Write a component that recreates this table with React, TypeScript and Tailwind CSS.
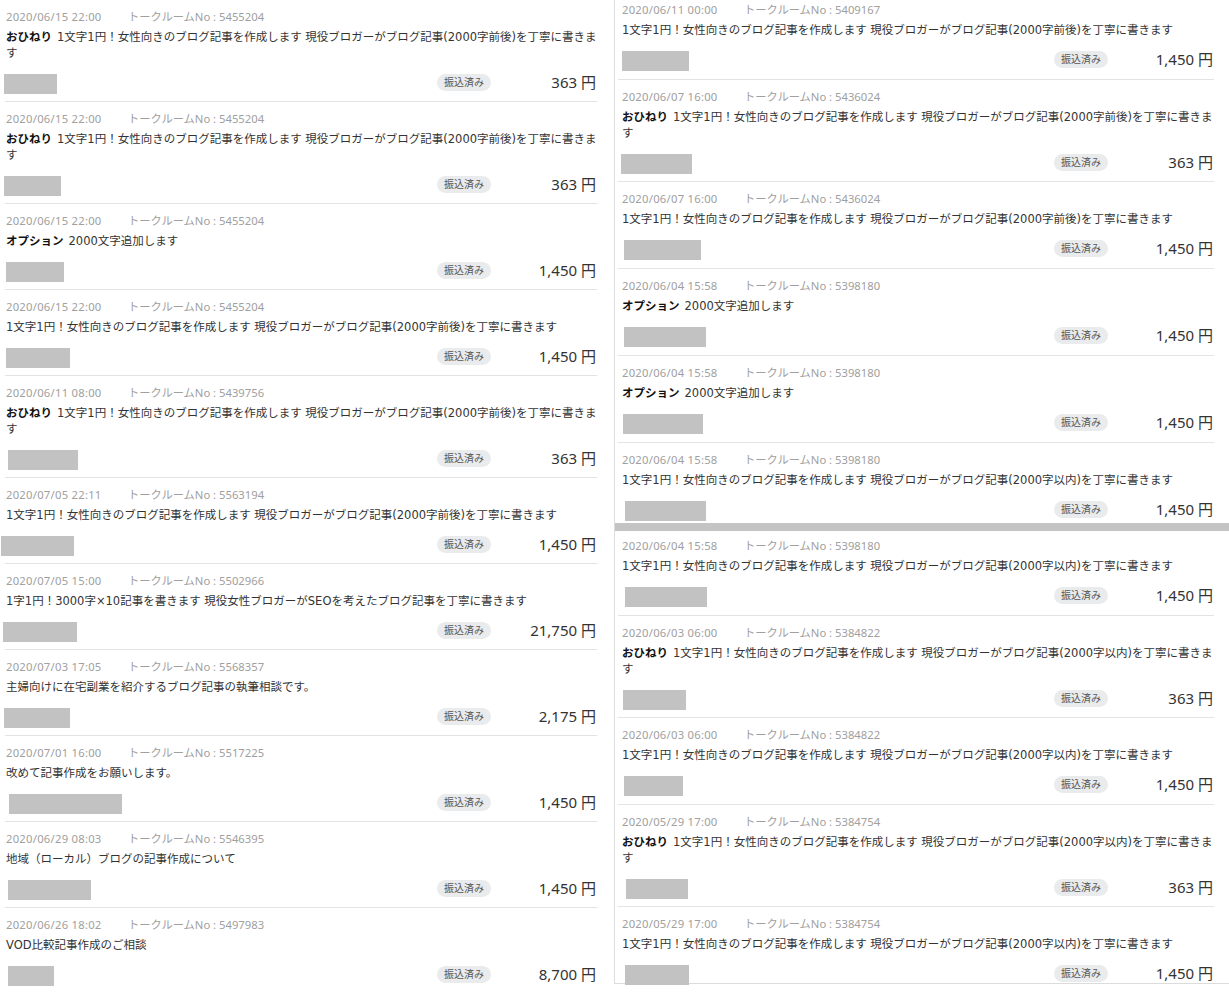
import React from "react";

type Row = {
  date: string;
  room: string;
  tag?: string;
  title: string;
  price: string;
  bx: number;
  bw: number;
};

const T_MAE = "1文字1円！女性向きのブログ記事を作成します 現役ブロガーがブログ記事(2000字前後)を丁寧に書きます";
const T_NAI = "1文字1円！女性向きのブログ記事を作成します 現役ブロガーがブログ記事(2000字以内)を丁寧に書きます";
const T_OPT = "2000文字追加します";

const left: Row[] = [
  { date: "2020/06/15 22:00", room: "5455204", tag: "おひねり", title: T_MAE, price: "363", bx: -2, bw: 53 },
  { date: "2020/06/15 22:00", room: "5455204", tag: "おひねり", title: T_MAE, price: "363", bx: -2, bw: 57 },
  { date: "2020/06/15 22:00", room: "5455204", tag: "オプション", title: T_OPT, price: "1,450", bx: 0, bw: 58 },
  { date: "2020/06/15 22:00", room: "5455204", title: T_MAE, price: "1,450", bx: 0, bw: 64 },
  { date: "2020/06/11 08:00", room: "5439756", tag: "おひねり", title: T_MAE, price: "363", bx: 2, bw: 70 },
  { date: "2020/07/05 22:11", room: "5563194", title: T_MAE, price: "1,450", bx: -5, bw: 73 },
  {
    date: "2020/07/05 15:00",
    room: "5502966",
    title: "1字1円！3000字×10記事を書きます 現役女性ブロガーがSEOを考えたブログ記事を丁寧に書きます",
    price: "21,750",
    bx: -3,
    bw: 74,
  },
  { date: "2020/07/03 17:05", room: "5568357", title: "主婦向けに在宅副業を紹介するブログ記事の執筆相談です。", price: "2,175", bx: -2, bw: 66 },
  { date: "2020/07/01 16:00", room: "5517225", title: "改めて記事作成をお願いします。", price: "1,450", bx: 3, bw: 113 },
  { date: "2020/06/29 08:03", room: "5546395", title: "地域（ローカル）ブログの記事作成について", price: "1,450", bx: 2, bw: 83 },
  { date: "2020/06/26 18:02", room: "5497983", title: "VOD比較記事作成のご相談", price: "8,700", bx: 2, bw: 46 },
];

const rightTop: Row[] = [
  { date: "2020/06/11 00:00", room: "5409167", title: T_MAE, price: "1,450", bx: 0, bw: 67 },
  { date: "2020/06/07 16:00", room: "5436024", tag: "おひねり", title: T_MAE, price: "363", bx: -1, bw: 71 },
  { date: "2020/06/07 16:00", room: "5436024", title: T_MAE, price: "1,450", bx: 2, bw: 77 },
  { date: "2020/06/04 15:58", room: "5398180", tag: "オプション", title: T_OPT, price: "1,450", bx: 2, bw: 82 },
  { date: "2020/06/04 15:58", room: "5398180", tag: "オプション", title: T_OPT, price: "1,450", bx: 1, bw: 80 },
  { date: "2020/06/04 15:58", room: "5398180", title: T_NAI, price: "1,450", bx: 3, bw: 81 },
];

const rightBottom: Row[] = [
  { date: "2020/06/04 15:58", room: "5398180", title: T_NAI, price: "1,450", bx: 3, bw: 82 },
  { date: "2020/06/03 06:00", room: "5384822", tag: "おひねり", title: T_NAI, price: "363", bx: 1, bw: 63 },
  { date: "2020/06/03 06:00", room: "5384822", title: T_NAI, price: "1,450", bx: 2, bw: 59 },
  { date: "2020/05/29 17:00", room: "5384754", tag: "おひねり", title: T_NAI, price: "363", bx: 4, bw: 62 },
  { date: "2020/05/29 17:00", room: "5384754", title: T_NAI, price: "1,450", bx: 3, bw: 64 },
];

function Item({ row, pad, pb, last }: { row: Row; pad: string; pb: string; last?: boolean }) {
  return (
    <div className={`${pad} ${pb} pt-[10px] ${last ? "" : "border-b border-[#e3e3e3]"}`}>
      <div className="flex h-[14px] items-center text-[11.25px] leading-[14px] text-[#a0a0a0]">
        <span className="inline-block w-[122px] tracking-[0.25px]">{row.date}</span>
        <span>トークルームNo : {row.room}</span>
      </div>
      <p
        className="mt-[5px] text-[11.5px] leading-[16px] text-[#333]"
        style={{ fontFamily: '"DejaVu Sans", "Noto Sans CJK JP", sans-serif' }}
      >
        {row.tag && <span className="mr-[5px] font-bold text-[#111]">{row.tag}</span>}
        {row.title}
      </p>
      <div className="mt-[11px] flex h-[20px] items-center justify-between">
        <div className="mt-[3px] h-[20px] bg-[#c2c2c2]" style={{ marginLeft: row.bx, width: row.bw }} />
        <div className="flex items-center">
          <span className="rounded-full bg-[#e9ebec] px-[7px] text-[10px] leading-[17px] text-[#555]">
            振込済み
          </span>
          <span className="w-[106px] pr-[1px] text-right text-[15px] leading-[20px] text-[#333]">
            {row.price} 円
          </span>
        </div>
      </div>
    </div>
  );
}

// right column: single-line rows are 1px taller than on the left
const rightPb = (r: Row) => (r.tag === "おひねり" ? "pb-[9px]" : "pb-[10px]");

export default function App() {
  return (
    <div
      className="flex h-[992px] w-[1229px] overflow-hidden bg-white"
      style={{ fontFamily: '"Noto Sans", "Noto Sans CJK JP", sans-serif' }}
    >
      {/* Left column */}
      <div className="w-[606px] shrink-0">
        <div className="ml-[5px] w-[592px]">
          {left.map((r, i) => (
            <Item key={i} row={r} pad="pl-[1px]" pb="pb-[9px]" last={i === left.length - 1} />
          ))}
        </div>
      </div>

      {/* Right column */}
      <div className="ml-[8px] h-[992px] w-[615px] shrink-0">
        <div className="h-[991px] border-b border-l border-[#dcdcdc]">
          <div className="mt-[-7px] ml-[3px] w-[596px]">
            {rightTop.map((r, i) => {
              const end = i === rightTop.length - 1;
              return <Item key={i} row={r} pad="pl-[4px]" pb={end ? "pb-[4px]" : rightPb(r)} last={end} />;
            })}
          </div>
          <div className="h-[8px] bg-[#c4c4c4]" />
          <div className="mt-[-2px] ml-[3px] w-[596px]">
            {rightBottom.map((r, i) => (
              <Item key={i} row={r} pad="pl-[4px]" pb={rightPb(r)} last={i === rightBottom.length - 1} />
            ))}
          </div>
        </div>
      </div>
    </div>
  );
}
